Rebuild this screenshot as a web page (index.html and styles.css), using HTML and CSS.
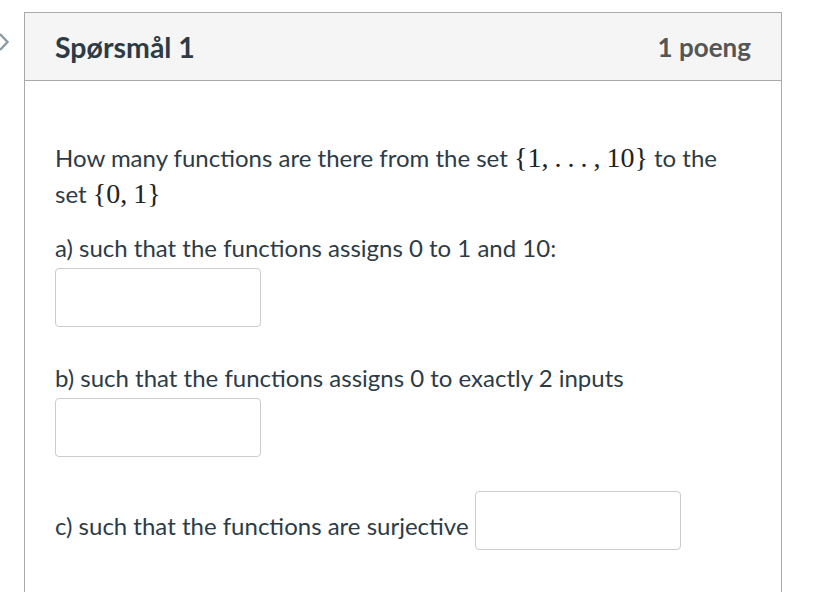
FILE: index.html
```html
<!DOCTYPE html>
<html lang="no">
<head>
<meta charset="utf-8">
<title>Spørsmål 1</title>
<link rel="stylesheet" href="styles.css">
</head>
<body>
<div class="page">
  <div class="gutter">
    <svg class="chevron" width="12" height="20" viewBox="0 0 12 20" aria-hidden="true">
      <polyline points="1,2 8.5,10 1,18" fill="none" stroke="#8b9ba7" stroke-width="2.4" stroke-linejoin="miter"/>
    </svg>
  </div>
  <div class="card">
    <div class="card-header">
      <h2 class="title">Spørsmål 1</h2>
      <span class="points">1 poeng</span>
    </div>
    <div class="card-body">
      <p class="intro">How many functions are there from the set <span class="math">{1, . . . , 10}</span> to the set <span class="math">{0, 1}</span></p>
      <p class="label">a) such that the functions assigns 0 to 1 and 10:</p>
      <input class="answer" type="text" aria-label="a">
      <p class="label gap">b) such that the functions assigns 0 to exactly 2 inputs</p>
      <input class="answer" type="text" aria-label="b">
      <div class="inline-row gap">
        <span class="label-inline">c) such that the functions are surjective</span>
        <input class="answer" type="text" aria-label="c">
      </div>
    </div>
  </div>
</div>
</body>
</html>
```
FILE: styles.css
```css
html, body {
  margin: 0;
  padding: 0;
  background: #ffffff;
}
body {
  font-family: Lato, "Open Sans", sans-serif;
  color: #2d3b45;
  overflow: hidden;
}
.page {
  display: flex;
  align-items: flex-start;
  padding-top: 12px;
}
.gutter {
  width: 24px;
  flex: none;
}
.chevron {
  display: block;
  margin-top: 20px;
  margin-left: -1px;
}
.card {
  width: 756px;
  border: 1px solid #aaaaaa;
  border-bottom: none;
  min-height: 600px;
}
.card-header {
  height: 67px;
  background: #f5f5f5;
  border-bottom: 1px solid #aaaaaa;
  display: flex;
  align-items: center;
  justify-content: space-between;
  padding: 0 30px;
}
.title {
  margin: 0;
  font-size: 28.5px;
  font-weight: 700;
  color: #2d3b45;
}
.points {
  font-size: 26px;
  font-weight: 700;
  color: #555555;
}
.card-body {
  padding: 59px 30px 0 30px;
  font-size: 24px;
}
.intro {
  margin: 0;
  line-height: 36px;
}
.math {
  font-family: "Liberation Serif", "DejaVu Serif", serif;
  font-size: 28px;
  line-height: 1;
  color: #222;
  word-spacing: -1px;
}
.label {
  margin: 18px 0 0 0;
  line-height: 36px;
}
.label.gap {
  margin-top: 33px;
}
.answer {
  display: block;
  box-sizing: border-box;
  width: 206px;
  height: 59px;
  margin: 2px 0 0 0;
  border: 1px solid #cccccc;
  border-radius: 4px;
  background: #ffffff;
  padding: 0 8px;
  font: inherit;
}
.inline-row {
  display: flex;
  align-items: flex-start;
}
.inline-row.gap {
  margin-top: 32px;
}
.label-inline {
  line-height: 36px;
  padding-top: 19px;
  margin-right: 6px;
}
```
